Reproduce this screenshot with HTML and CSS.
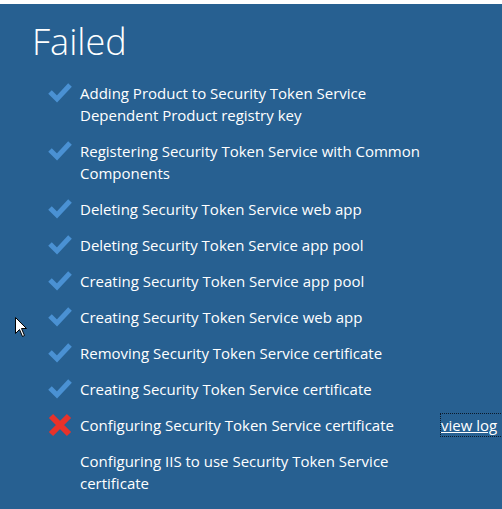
FILE: index.html
```html
<!DOCTYPE html>
<html>
<head>
<meta charset="utf-8">
<link rel="stylesheet" href="styles.css">
</head>
<body>
<div class="panel">
  <h1 class="title">Failed</h1>
  <ul class="steps">
    <li class="step">
      <span class="icon"><svg viewBox="0 0 24 22" width="24" height="22"><path d="M2 10 L9 17 L22 3" class="check"/></svg></span>
      <span class="text">Adding Product to Security Token Service Dependent Product registry key</span>
    </li>
    <li class="step">
      <span class="icon"><svg viewBox="0 0 24 22" width="24" height="22"><path d="M2 10 L9 17 L22 3" class="check"/></svg></span>
      <span class="text">Registering Security Token Service with Common Components</span>
    </li>
    <li class="step">
      <span class="icon"><svg viewBox="0 0 24 22" width="24" height="22"><path d="M2 10 L9 17 L22 3" class="check"/></svg></span>
      <span class="text">Deleting Security Token Service web app</span>
    </li>
    <li class="step">
      <span class="icon"><svg viewBox="0 0 24 22" width="24" height="22"><path d="M2 10 L9 17 L22 3" class="check"/></svg></span>
      <span class="text">Deleting Security Token Service app pool</span>
    </li>
    <li class="step">
      <span class="icon"><svg viewBox="0 0 24 22" width="24" height="22"><path d="M2 10 L9 17 L22 3" class="check"/></svg></span>
      <span class="text">Creating Security Token Service app pool</span>
    </li>
    <li class="step">
      <span class="icon"><svg viewBox="0 0 24 22" width="24" height="22"><path d="M2 10 L9 17 L22 3" class="check"/></svg></span>
      <span class="text">Creating Security Token Service web app</span>
    </li>
    <li class="step">
      <span class="icon"><svg viewBox="0 0 24 22" width="24" height="22"><path d="M2 10 L9 17 L22 3" class="check"/></svg></span>
      <span class="text">Removing Security Token Service certificate</span>
    </li>
    <li class="step">
      <span class="icon"><svg viewBox="0 0 24 22" width="24" height="22"><path d="M2 10 L9 17 L22 3" class="check"/></svg></span>
      <span class="text">Creating Security Token Service certificate</span>
    </li>
    <li class="step">
      <span class="icon"><svg viewBox="0 0 24 24" width="24" height="24"><path d="M3 3 L21 21 M21 3 L3 21" class="cross"/></svg></span>
      <span class="text">Configuring Security Token Service certificate</span>
      <a class="viewlog" href="#">view log</a>
    </li>
    <li class="step">
      <span class="icon"></span>
      <span class="text">Configuring IIS to use Security Token Service certificate</span>
    </li>
  </ul>
  <svg class="cursor" viewBox="0 0 13 21" width="13" height="21"><path d="M0.5 0.5 L0.5 16.5 L4.5 12.5 L7.5 19.5 L9.5 18.5 L6.5 11.5 L11.5 11.5 Z" fill="#fff" stroke="#000" stroke-width="1"/></svg>
</div>
</body>
</html>
```
FILE: styles.css
```css
html, body {
  margin: 0;
  padding: 0;
  background: #ffffff;
}
body {
  padding-top: 4px;
}
.panel {
  position: relative;
  background: #276091;
  height: 505px;
  padding: 16px 0 0 32px;
  box-sizing: border-box;
  font-family: "Open Sans", "Noto Sans", sans-serif;
  color: #ffffff;
}
.title {
  margin: 0;
  font-size: 36px;
  font-weight: 300;
  line-height: 44px;
  letter-spacing: 0;
}
.steps {
  list-style: none;
  margin: 18px 0 0 0;
  padding: 0 0 0 16px;
  display: flex;
  flex-direction: column;
  gap: 14px;
}
.step {
  display: grid;
  grid-template-columns: 32px 352px auto;
  align-items: start;
  font-size: 15px;
  line-height: 22px;
}
.icon {
  height: 22px;
  display: flex;
  align-items: center;
}
.check {
  fill: none;
  stroke: #4a91d3;
  stroke-width: 5;
  stroke-linecap: butt;
  stroke-linejoin: miter;
}
.cross {
  fill: none;
  stroke: #e8322a;
  stroke-width: 6;
}
.viewlog {
  color: #ffffff;
  text-decoration: underline;
  white-space: nowrap;
  margin-left: 9px;
  outline: 1px dotted #0b1a2a;
  outline-offset: 0;
}
.cursor {
  position: absolute;
  left: 15px;
  top: 313px;
}
```
